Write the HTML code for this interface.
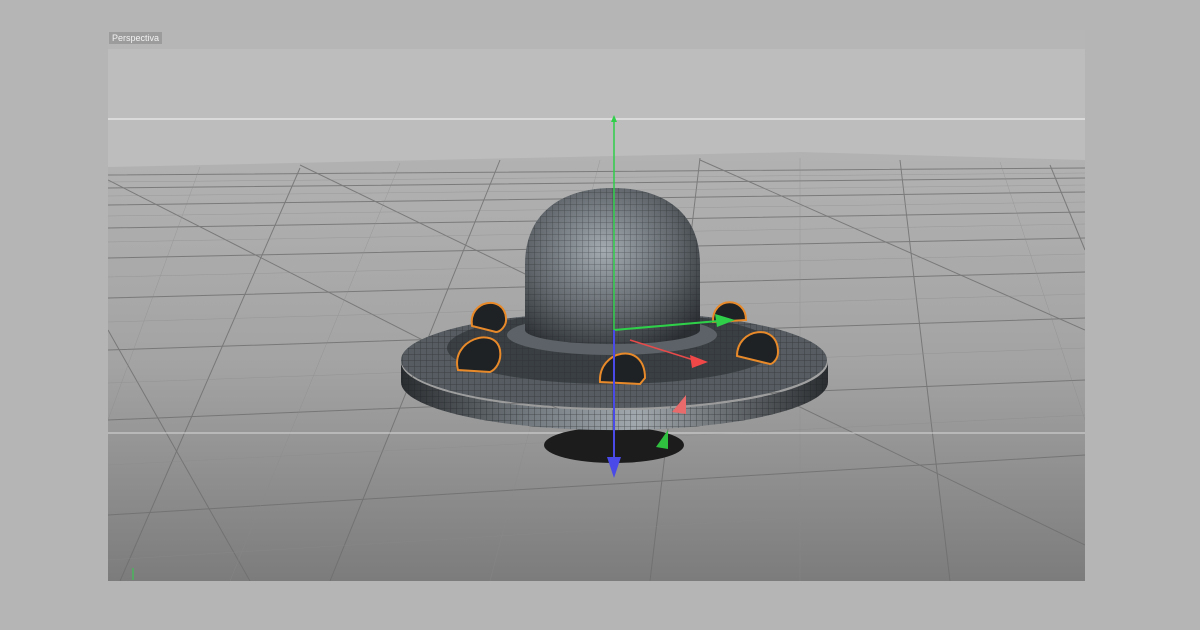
<!DOCTYPE html>
<html><head><style>
html,body{margin:0;padding:0;background:#b5b5b5;width:1200px;height:630px;overflow:hidden}
svg{position:absolute;left:0;top:0}
.lbl{position:absolute;left:109px;top:32px;background:#9c9c9c;color:#f2f2f2;font:9px "Liberation Sans",sans-serif;padding:1px 3px}
</style></head><body>
<svg width="1200" height="630" viewBox="0 0 1200 630">
<defs>
<linearGradient id="floor" x1="0" y1="0" x2="0" y2="1">
<stop offset="0" stop-color="#b2b2b2"/><stop offset="0.5" stop-color="#a3a3a3"/><stop offset="1" stop-color="#7c7c7c"/></linearGradient>
<radialGradient id="dome" cx="0.45" cy="0.4" r="0.7"><stop offset="0" stop-color="#a4acb2"/><stop offset="0.6" stop-color="#60666b"/><stop offset="1" stop-color="#2c3034"/></radialGradient>
<linearGradient id="rim" x1="0" y1="0" x2="1" y2="0"><stop offset="0" stop-color="#2a2d30"/><stop offset="0.3" stop-color="#737a7f"/><stop offset="0.55" stop-color="#a2a9ae"/><stop offset="1" stop-color="#2a2d30"/></linearGradient>
<pattern id="mesh" width="6" height="6" patternUnits="userSpaceOnUse"><path d="M0 0H6M0 0V6" stroke="#1e2124" stroke-width="0.8" fill="none"/></pattern>
<clipPath id="vp"><rect x="108" y="30" width="977" height="551"/></clipPath>
</defs>
<rect x="108" y="30" width="977" height="551" fill="#bdbdbd"/>
<rect x="108" y="30" width="977" height="19" fill="#b6b6b6"/>
<line x1="108" y1="119" x2="1085" y2="119" stroke="#e4e4e4" stroke-width="1.5"/>
<g clip-path="url(#vp)">
<polygon points="108,167 800,152 1085,160 1085,581 108,581" fill="url(#floor)"/>
<g stroke="#6e6e6e" stroke-width="1" fill="none" opacity="0.8">
<path d="M108,175 L1085,168 M108,188 L1085,178 M108,205 L1085,192 M108,228 L1085,212 M108,258 L1085,238 M108,298 L1085,272 M108,350 L1085,318 M108,420 L1085,380 M108,515 L1085,455"/>
<path d="M108,180 L580,420 M300,168 L120,581 M500,160 L330,581 M700,158 L650,581 M900,160 L950,581 M1050,165 L1085,250 M108,330 L250,581 M700,160 L1085,330 M300,165 L1085,545"/>
</g>
<g stroke="#8a8a8a" stroke-width="0.5" fill="none" opacity="0.6">
<path d="M108,182 L1085,173 M108,196 L1085,185 M108,216 L1085,202 M108,242 L1085,224 M108,277 L1085,254 M108,322 L1085,294 M108,383 L1085,348 M108,465 L1085,415 M108,560 L1085,500"/>
<path d="M200,167 L108,420 M400,163 L230,581 M600,160 L490,581 M800,158 L800,581 M1000,162 L1085,420"/>
</g>
<line x1="108" y1="433" x2="1085" y2="433" stroke="#d8d8d8" stroke-width="1"/>
</g>
<ellipse cx="614" cy="445" rx="70" ry="18" fill="#1c1c1c"/>
<path d="M401,362 A213,48 0 0 0 828,362 L828,382 A213,48 0 0 1 401,382 Z" fill="url(#rim)"/>
<path d="M401,362 A213,48 0 0 0 828,362 L828,382 A213,48 0 0 1 401,382 Z" fill="url(#mesh)" opacity="0.7"/>
<ellipse cx="614" cy="360" rx="213" ry="48" fill="#565c61"/>
<ellipse cx="614" cy="360" rx="213" ry="48" fill="url(#mesh)" opacity="0.6"/>
<ellipse cx="612" cy="348" rx="165" ry="36" fill="#3a3f43"/>
<ellipse cx="612" cy="348" rx="165" ry="36" fill="url(#mesh)" opacity="0.4"/>
<ellipse cx="612" cy="335" rx="105" ry="20" fill="#5c6267"/>
<path d="M525,330 L525,265 C525,210 565,188 613,188 C661,188 700,210 700,265 L700,330 A87,14 0 0 1 525,330 Z" fill="url(#dome)"/>
<path d="M525,330 L525,265 C525,210 565,188 613,188 C661,188 700,210 700,265 L700,330 A87,14 0 0 1 525,330 Z" fill="url(#mesh)" opacity="0.55"/>
<g stroke="#e88a2a" stroke-width="2" fill="#1f2225">
<path d="M472,326 C468,300 504,294 506,318 C507,326 500,332 496,332 Z"/>
<path d="M458,370 C450,340 495,325 500,350 C502,362 495,370 490,372 Z"/>
<path d="M600,382 C598,350 645,340 645,378 L640,384 Z"/>
<path d="M713,322 C712,296 746,296 746,320 Z"/>
<path d="M737,356 C737,328 778,322 778,352 C778,360 772,364 770,364 Z"/>
</g>
<line x1="614" y1="118" x2="614" y2="330" stroke="#2fcf4a" stroke-width="1.5"/>
<polygon points="611,122 617,122 614,115" fill="#2fcf4a"/>
<line x1="614" y1="330" x2="730" y2="320" stroke="#2fcf4a" stroke-width="2"/>
<polygon points="715,314 735,320 717,327" fill="#2fcf4a"/>
<line x1="614" y1="330" x2="614" y2="470" stroke="#4a4ae8" stroke-width="2"/>
<polygon points="607,457 621,457 614,478" fill="#4a4ae8"/>
<line x1="630" y1="340" x2="700" y2="362" stroke="#e84a4a" stroke-width="1.5"/>
<polygon points="690,355 708,362 692,368" fill="#f04848"/>
<polygon points="672,412 686,395 686,414" fill="#e86a6a"/>
<polygon points="656,447 668,430 668,449" fill="#30c040"/>
<line x1="133" y1="568" x2="133" y2="580" stroke="#2fcf4a" stroke-width="1"/>
</svg>
<div class="lbl">Perspectiva</div>
</body></html>
